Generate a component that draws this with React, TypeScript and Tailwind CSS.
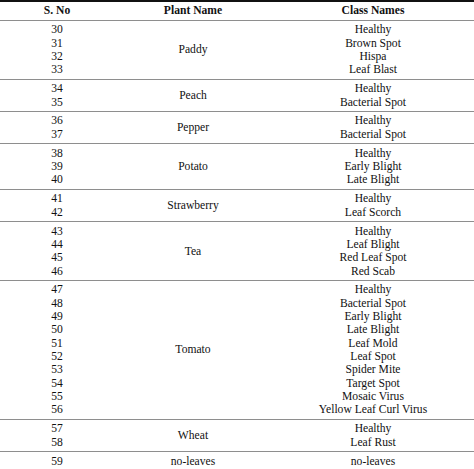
import React from "react";

type Group = { start: number; plant: string; classes: string[] };

const groups: Group[] = [
  { start: 30, plant: "Paddy", classes: ["Healthy", "Brown Spot", "Hispa", "Leaf Blast"] },
  { start: 34, plant: "Peach", classes: ["Healthy", "Bacterial Spot"] },
  { start: 36, plant: "Pepper", classes: ["Healthy", "Bacterial Spot"] },
  { start: 38, plant: "Potato", classes: ["Healthy", "Early Blight", "Late Blight"] },
  { start: 41, plant: "Strawberry", classes: ["Healthy", "Leaf Scorch"] },
  { start: 43, plant: "Tea", classes: ["Healthy", "Leaf Blight", "Red Leaf Spot", "Red Scab"] },
  {
    start: 47,
    plant: "Tomato",
    classes: [
      "Healthy",
      "Bacterial Spot",
      "Early Blight",
      "Late Blight",
      "Leaf Mold",
      "Leaf Spot",
      "Spider Mite",
      "Target Spot",
      "Mosaic Virus",
      "Yellow Leaf Curl Virus",
    ],
  },
  { start: 57, plant: "Wheat", classes: ["Healthy", "Leaf Rust"] },
  { start: 59, plant: "no-leaves", classes: ["no-leaves"] },
];

export default function App() {
  return (
    <div
      className="w-[474px] h-[469px] overflow-hidden bg-white text-[#111] text-[11.6px] leading-[13.33px]"
      style={{ fontFamily: '"Liberation Serif", "Times New Roman", serif' }}
    >
      <div className="h-[2px] bg-[#111]" />
      <div className="grid grid-cols-[114px_158px_202px] h-[18px] items-center font-bold text-center">
        <div>S. No</div>
        <div>Plant Name</div>
        <div>Class Names</div>
      </div>
      {groups.map((g) => (
        <div key={g.plant}>
          <div className="h-px bg-[#8e8e8e]" />
          <div className="grid grid-cols-[114px_158px_202px] py-[2.3px] text-center">
            <div className="flex flex-col">
              {g.classes.map((_, i) => (
                <div key={i}>{g.start + i}</div>
              ))}
            </div>
            <div className="flex items-center justify-center">{g.plant}</div>
            <div className="flex flex-col">
              {g.classes.map((c) => (
                <div key={c}>{c}</div>
              ))}
            </div>
          </div>
        </div>
      ))}
    </div>
  );
}
